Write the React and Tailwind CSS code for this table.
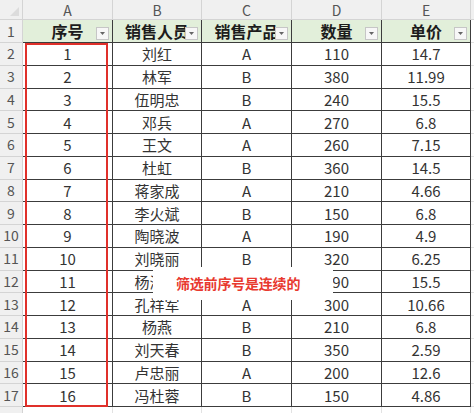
import React from 'react';

const rows = [
  [1, '刘红', 'A', 110, '14.7'],
  [2, '林军', 'B', 380, '11.99'],
  [3, '伍明忠', 'B', 240, '15.5'],
  [4, '邓兵', 'A', 270, '6.8'],
  [5, '王文', 'A', 260, '7.15'],
  [6, '杜虹', 'B', 360, '14.5'],
  [7, '蒋家成', 'A', 210, '4.66'],
  [8, '李火斌', 'B', 150, '6.8'],
  [9, '陶晓波', 'A', 190, '4.9'],
  [10, '刘晓丽', 'B', 320, '6.25'],
  [11, '杨海涛', 'A', 390, '15.5'],
  [12, '孔祥军', 'A', 300, '10.66'],
  [13, '杨燕', 'B', 210, '6.8'],
  [14, '刘天春', 'B', 350, '2.59'],
  [15, '卢忠丽', 'A', 200, '12.6'],
  [16, '冯杜蓉', 'B', 150, '4.86'],
];

const headers = ['序号', '销售人员', '销售产品', '数量', '单价'];
const letters = ['A', 'B', 'C', 'D', 'E'];

function FilterButton() {
  return (
    <span className="absolute right-[3px] top-[7px] flex h-[13px] w-[13px] items-center justify-center border border-[#c6c6c6] bg-[#f7f7f7]">
      <svg width="5" height="3" viewBox="0 0 5 3">
        <path d="M0 0h5L2.5 3z" fill="#666" />
      </svg>
    </span>
  );
}

export default function App() {
  return (
    <div
      className="relative h-[413px] w-[474px] overflow-hidden bg-white text-[15px] text-[#333]"
      style={{ fontFamily: '"Noto Sans CJK SC", "Noto Sans", sans-serif' }}
    >
      <div className="grid grid-cols-[23px_90px_89px_90px_90px_89px_1fr] grid-rows-[20px_23px_repeat(16,22.75px)_1fr] h-full">
        {/* column letters */}
        <div className="relative border-b border-r border-[#d4d4d4] bg-[#f0f0f0]">
          <svg className="absolute bottom-[3px] right-[3px]" width="9" height="9" viewBox="0 0 9 9">
            <path d="M9 0V9H0z" fill="#dcdcdc" />
          </svg>
        </div>
        {letters.map((l) => (
          <div key={l} className="flex items-center justify-center border-b border-r border-[#d4d4d4] bg-[#f0f0f0] text-[14px] leading-none text-[#555]">
            {l}
          </div>
        ))}
        <div className="border-b border-[#d4d4d4] bg-[#f0f0f0]" />

        {/* header row */}
        <div className="flex items-center justify-center border-b border-r border-[#d4d4d4] bg-[#f0f0f0] text-[14px] text-[#555]">1</div>
        {headers.map((h) => (
          <div
            key={h}
            className="relative flex items-center justify-center overflow-hidden whitespace-nowrap border-b border-r border-[#3c3c3c] bg-[#e2efda] text-[16px] font-bold leading-none text-[#1c1c1c]"
          >
            {h}
            <FilterButton />
          </div>
        ))}
        <div className="border-b border-[#e2e2e2]" />

        {rows.map((r, ri) => (
          <React.Fragment key={ri}>
            <div className="flex items-center justify-center border-b border-r border-[#d4d4d4] bg-[#f0f0f0] text-[14px] text-[#555]">
              {ri + 2}
            </div>
            {r.map((c, ci) => (
              <div
                key={ci}
                className="flex items-center justify-center whitespace-nowrap border-b border-r border-[#3c3c3c] leading-none"
              >
                {c}
              </div>
            ))}
            <div className="border-b border-[#e2e2e2]" />
          </React.Fragment>
        ))}

        <div className="border-r border-[#d4d4d4] bg-[#f0f0f0]" />
        {letters.map((l) => (
          <div key={l} className="border-r border-[#e2e2e2]" />
        ))}
        <div />
      </div>

      {/* red box around column A */}
      <div className="pointer-events-none absolute left-[25px] top-[43px] h-[364px] w-[83px] border-2 border-[#e0302a]" />

      {/* annotation */}
      <div className="absolute left-[153px] top-[267px] flex h-[33px] w-[180px] items-center bg-white pl-[23px]">
        <span className="text-[14px] font-bold tracking-[-0.2px] text-[#e8392f]">筛选前序号是连续的</span>
      </div>
    </div>
  );
}
